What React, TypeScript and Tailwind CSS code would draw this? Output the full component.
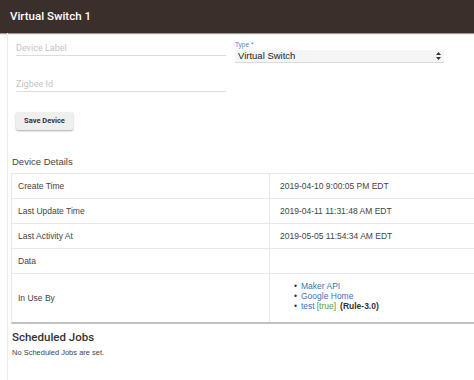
import { ReactNode } from "react";

const rows: { label: string; value?: string }[] = [
  { label: "Create Time", value: "2019-04-10 9:00:05 PM EDT" },
  { label: "Last Update Time", value: "2019-04-11 11:31:48 AM EDT" },
  { label: "Last Activity At", value: "2019-05-05 11:54:34 AM EDT" },
  { label: "Data" },
];

function Row({ label, children }: { label: string; children?: ReactNode }) {
  return (
    <div className="flex h-[25px] border-b border-[#e8e8e8]">
      <div className="flex w-[258px] items-center border-r border-[#e8e8e8] pl-[6px]">{label}</div>
      <div className="flex flex-1 items-center pl-[10px]">{children}</div>
    </div>
  );
}

export default function App() {
  return (
    <div className="h-[380px] w-[474px] overflow-hidden bg-white font-['Roboto',sans-serif]">
      <div className="flex h-[33px] items-center bg-[#3b2f2b] pl-[10px] text-[11.5px] font-medium text-white shadow-[0_1px_1px_#9a9a9a]">
        Virtual Switch 1
      </div>

      <div className="ml-[7px] h-[347px] border-l border-[#ececec]">
        <div className="flex pl-2">
          <div className="w-[210px]">
            <div className="mt-[8px] h-[15px] border-b border-[#dcdcdc] text-[9px] leading-[14px] text-[#c4c4c4]">Device Label</div>
            <div className="mt-[21px] h-[15px] border-b border-[#dcdcdc] text-[9px] leading-[14px] text-[#c4c4c4]">Zigbee Id</div>
            <button className="mt-[20px] flex h-[18px] w-[57px] items-center justify-center rounded-[2px] bg-[#efefef] text-[7.5px] font-bold text-[#333] shadow-[0_1px_2px_#aaa]">
              Save Device
            </button>
          </div>
          <div className="ml-[9px] w-[209px] font-['Liberation_Sans',sans-serif]">
            <div className="mt-[8px] text-[6.5px] leading-[8px] text-[#4d86c8]">Type *</div>
            <div className="mt-[1px] flex h-[13px] items-center justify-between border-b border-[#dadada] bg-[#f5f5f5] pl-[3px] pr-[3px] text-[9.5px] text-[#222]">
              <span>Virtual Switch</span>
              <svg width="5" height="8" viewBox="0 0 5 8" fill="#333">
                <path d="M2.5 0 L5 3 L0 3 Z M0 5 L5 5 L2.5 8 Z" />
              </svg>
            </div>
          </div>
        </div>

        <div className="mt-[26px] pl-[4px] font-['Liberation_Sans',sans-serif] text-[9.5px] leading-[12px] text-[#444]">Device Details</div>

        <div className="mt-[5px] ml-[3px] w-[480px] border border-b-2 border-[#e8e8e8] border-b-[#c2c2c2] font-['Liberation_Sans',sans-serif] text-[8.5px] text-[#444]">
          {rows.map((r) => (
            <Row key={r.label} label={r.label}>{r.value}</Row>
          ))}
          <div className="flex h-[48px]">
            <div className="flex w-[258px] items-center border-r border-[#e8e8e8] pl-[6px]">In Use By</div>
            <ul className="flex flex-1 flex-col justify-center pb-[4px] pl-[24px] leading-[10px]">
              <li className="flex items-center"><span className="mr-[4px] text-[#333]">•</span><span className="text-[#3a74b7]">Maker API</span></li>
              <li className="flex items-center"><span className="mr-[4px] text-[#333]">•</span><span className="text-[#3a74b7]">Google Home</span></li>
              <li className="flex items-center">
                <span className="mr-[4px] text-[#333]">•</span>
                <span className="text-[#3a74b7]">test</span>
                <span className="ml-[2px] text-[#5b9a3a]">[true]</span>
                <span className="ml-[4px] font-bold text-[#333]">(Rule-3.0)</span>
              </li>
            </ul>
          </div>
        </div>

        <div className="mt-[6px] pl-[4px] text-[11.5px] font-medium leading-[14px] text-[#333]">Scheduled Jobs</div>
        <div className="mt-[3px] pl-[4px] font-['Liberation_Sans',sans-serif] text-[7.5px] text-[#444]">No Scheduled Jobs are set.</div>
      </div>
    </div>
  );
}
